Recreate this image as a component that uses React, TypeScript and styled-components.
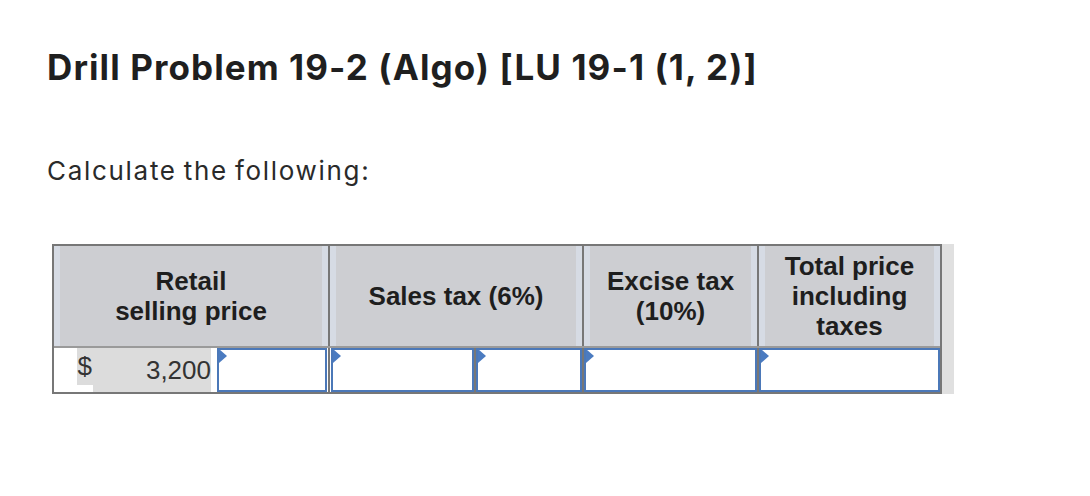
import React from 'react';
import styled, { createGlobalStyle } from 'styled-components';

const GlobalStyle = createGlobalStyle`
  html, body {
    margin: 0;
    padding: 0;
    background: #ffffff;
  }
`;

const App: React.FC = () => {
  return (
    <>
      <GlobalStyle />
      <Page>
        <Title>Drill Problem 19-2 (Algo) [LU 19-1 (1, 2)]</Title>
        <Prompt>Calculate the following:</Prompt>
        <TableWrap>
          <Table>
            <HeaderRow>
              <HeaderCell>
                Retail
                <br />
                selling price
              </HeaderCell>
              <HeaderCell>Sales tax (6%)</HeaderCell>
              <HeaderCell>
                Excise tax
                <br />
                (10%)
              </HeaderCell>
              <HeaderCell>
                Total price
                <br />
                including
                <br />
                taxes
              </HeaderCell>
            </HeaderRow>
            <BodyRow>
              <SplitCell>
                <DollarCell>
                  <DollarSign>$</DollarSign>
                </DollarCell>
                <AmountCell>3,200</AmountCell>
                <Spacer $width={6} />
                <AnswerInput $width={110} />
                <Spacer $width={1} />
              </SplitCell>
              <SplitCell>
                <Spacer $width={1} />
                <AnswerInput $width={143} />
                <Divider />
                <AnswerInput $width={106} />
              </SplitCell>
              <SplitCell>
                <AnswerInput $width={173} />
              </SplitCell>
              <SplitCell>
                <AnswerInput $width={181} />
              </SplitCell>
            </BodyRow>
          </Table>
          <SideStrip />
        </TableWrap>
      </Page>
    </>
  );
};

export default App;

const AnswerInput: React.FC<{ $width: number }> = ({ $width }) => (
  <InputBox $width={$width}>
    <Marker />
  </InputBox>
);

const Page = styled.div`
  padding: 45px 0 0 47px;
  color: #222222;
`;

const Title = styled.h1`
  margin: 0;
  font-family: 'Inter', 'Liberation Sans', sans-serif;
  font-weight: 700;
  font-size: 35px;
  line-height: 44px;
  letter-spacing: 1.1px;
  color: #1f1f1f;
`;

const Prompt = styled.p`
  margin: 67px 0 0;
  font-family: 'Inter', 'Liberation Sans', sans-serif;
  font-weight: 400;
  font-size: 26px;
  line-height: 30px;
  letter-spacing: 1.7px;
  word-spacing: -2px;
  color: #2a2a2a;
`;

const TableWrap = styled.div`
  display: flex;
  margin: 58px 0 0 5px;
`;

const Table = styled.div`
  display: flex;
  flex-direction: column;
  border: 2px solid #777777;
  background: #777777;
  font-family: 'Liberation Sans', Arial, sans-serif;
`;

const HeaderRow = styled.div`
  display: grid;
  grid-template-columns: 274px 252px 173px 181px;
  column-gap: 2px;
  height: 100px;
`;

const HeaderCell = styled.div`
  display: flex;
  align-items: center;
  justify-content: center;
  text-align: center;
  background: #cdced2;
  border-left: 6px solid #d6dbe4;
  border-right: 6px solid #d6dbe4;
  font-weight: 700;
  font-size: 26px;
  line-height: 30px;
  color: #1e1e1e;
`;

const BodyRow = styled.div`
  display: grid;
  grid-template-columns: 274px 252px 173px 181px;
  column-gap: 2px;
  height: 44px;
  margin-top: 2px;
  box-shadow: 0 -2px 0 #9a9a9a;
`;

const SplitCell = styled.div`
  display: flex;
  background: #ffffff;
`;

const DollarCell = styled.div`
  width: 39px;
  display: flex;
  align-items: center;
  justify-content: flex-end;
  background: #ffffff;
`;

const DollarSign = styled.span`
  display: flex;
  align-items: center;
  height: 37px;
  margin-bottom: 7px;
  padding: 0 1px;
  background: #dcdcdc;
  font-size: 26px;
  color: #333333;
`;

const AmountCell = styled.div`
  width: 118px;
  display: flex;
  align-items: center;
  justify-content: flex-end;
  background: #dcdcdc;
  font-size: 26px;
  color: #333333;
`;

const Spacer = styled.div<{ $width: number }>`
  width: ${(props) => props.$width}px;
  flex: none;
  background: #ffffff;
`;

const Divider = styled.div`
  width: 2px;
  flex: none;
  background: #777777;
`;

const InputBox = styled.div<{ $width: number }>`
  position: relative;
  box-sizing: border-box;
  width: ${(props) => props.$width}px;
  flex: none;
  height: 44px;
  border: 2px solid #4b78b8;
  background: #ffffff;
`;

const Marker = styled.span`
  position: absolute;
  top: 0;
  left: 0;
  width: 0;
  height: 0;
  border-top: 7px solid transparent;
  border-bottom: 7px solid transparent;
  border-left: 8px solid #4b7bc0;
  transform: translateY(-1px);
`;

const SideStrip = styled.div`
  width: 12px;
  background: #e0e0e0;
`;
